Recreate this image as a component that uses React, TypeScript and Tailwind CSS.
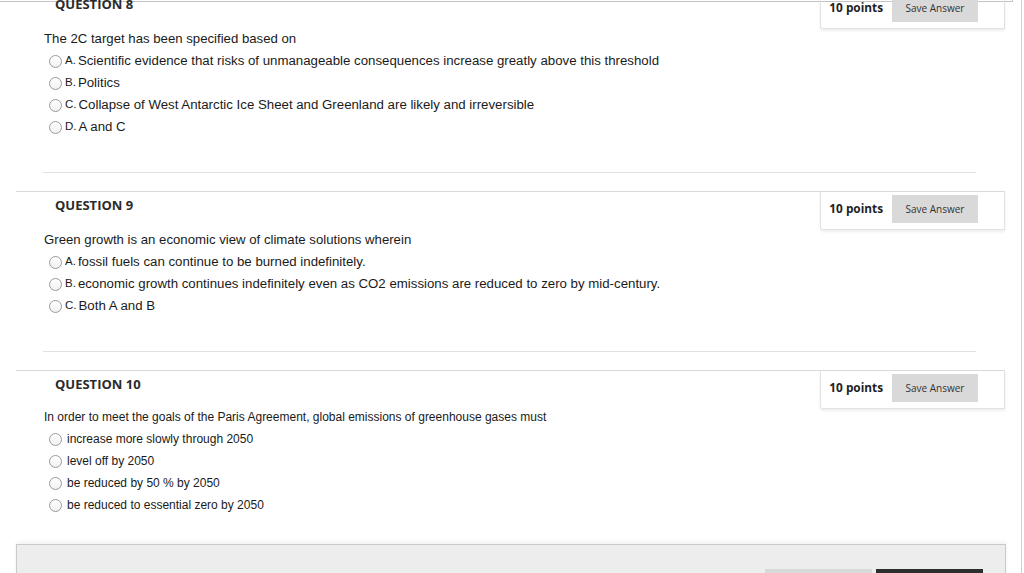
type Option = { label?: string; text: string };

type Question = {
  num: number;
  text: string;
  options: Option[];
  small?: boolean;
};

const questions: Question[] = [
  {
    num: 8,
    text: "The 2C target has been specified based on",
    options: [
      {
        label: "A.",
        text: "Scientific evidence that risks of unmanageable consequences increase greatly above this threshold",
      },
      { label: "B.", text: "Politics" },
      {
        label: "C.",
        text: "Collapse of West Antarctic Ice Sheet and Greenland are likely and irreversible",
      },
      { label: "D.", text: "A and C" },
    ],
  },
  {
    num: 9,
    text: "Green growth is an economic view of climate solutions wherein",
    options: [
      { label: "A.", text: "fossil fuels can continue to be burned indefinitely." },
      {
        label: "B.",
        text: "economic growth continues indefinitely even as CO2 emissions are reduced to zero by mid-century.",
      },
      { label: "C.", text: "Both A and B" },
    ],
  },
  {
    num: 10,
    small: true,
    text: "In order to meet the goals of the Paris Agreement, global emissions of greenhouse gases must",
    options: [
      { text: "increase more slowly through 2050" },
      { text: "level off by 2050" },
      { text: "be reduced by 50 % by 2050" },
      { text: "be reduced to essential zero by 2050" },
    ],
  },
];

const sans = "font-['Liberation_Sans',Arial,sans-serif]";
const open = "font-['Open_Sans',sans-serif]";

const Radio = () => (
  <span className="ml-[5px] h-[13px] w-[13px] shrink-0 rounded-full border border-[#9a9a9a] bg-gradient-to-b from-white to-[#f1f1f1]" />
);

const QuestionBlock = ({ q, last }: { q: Question; last: boolean }) => {
  return (
    <div>
      <div className="mx-[16px] flex h-[38px] justify-between border-t border-[#d9d9d9]">
        <div
          className={`${open} pl-[39px] pt-[5px] text-[13px] leading-[16px] font-bold text-[#2b2b2b]`}
        >
          QUESTION {q.num}
        </div>
        <div className="-mt-px flex h-[39px] w-[185px] items-start justify-end rounded-bl-[3px] border-x border-b border-[#e2e2e2] pr-[26px] shadow-[0_2px_3px_rgba(0,0,0,0.07)]">
          <span
            className={`${open} mt-[9px] text-[11.8px] leading-[16px] font-bold text-[#1e1e1e]`}
          >
            10 points
          </span>
          <button
            className={`${open} ml-[9px] mt-[4px] h-[28px] w-[86px] bg-[#d9d9d9] text-[10px] text-[#333]`}
          >
            Save Answer
          </button>
        </div>
      </div>
      <div className={`${sans} pl-[44px] text-[#1a1a1a]`}>
        {q.small ? (
          <div className="h-[18px] text-[12px] leading-[18px]">{q.text}</div>
        ) : (
          <div className="h-[22px] text-[13.2px] leading-[22px]">{q.text}</div>
        )}
        <div className={q.small ? "mt-[2px]" : ""}>
          {q.options.map((o) => (
            <div key={o.text} className="flex h-[22px] items-center">
              <Radio />
              {o.label ? (
                <>
                  <span className="ml-[3px] text-[11.5px]">{o.label}</span>
                  <span className="ml-[2px] text-[13.25px]">{o.text}</span>
                </>
              ) : (
                <span className="ml-[5px] text-[12px]">{o.text}</span>
              )}
            </div>
          ))}
        </div>
      </div>
      {!last && (
        <div className="mb-[18px] ml-[43px] mr-[45px] mt-[34px] border-t border-[#e1e1e1]" />
      )}
    </div>
  );
};

export default function App() {
  return (
    <div className="h-[573px] w-[1024px] overflow-hidden bg-white">
      <div className="h-[573px] w-[1022px] border-r border-[#cfcfcf]">
        <div className="h-[2px] w-[1013px] border-b border-r border-[#c4c4c4]" />
        <div className="-mt-[12px]">
          {questions.map((q, i) => (
            <QuestionBlock key={q.num} q={q} last={i === questions.length - 1} />
          ))}
          <div className="ml-[16px] mt-[28px] h-[60px] w-[990px] border border-[#c9c9c9] bg-[#ededed] shadow-[0_-2px_4px_rgba(0,0,0,0.06)]">
            <div className="flex justify-end gap-[4px] pr-[22px] pt-[24px]">
              <div className="h-[20px] w-[107px] bg-[#d9d9d9]" />
              <div className="h-[20px] w-[107px] bg-[#2e2e2e]" />
            </div>
          </div>
        </div>
      </div>
    </div>
  );
}
